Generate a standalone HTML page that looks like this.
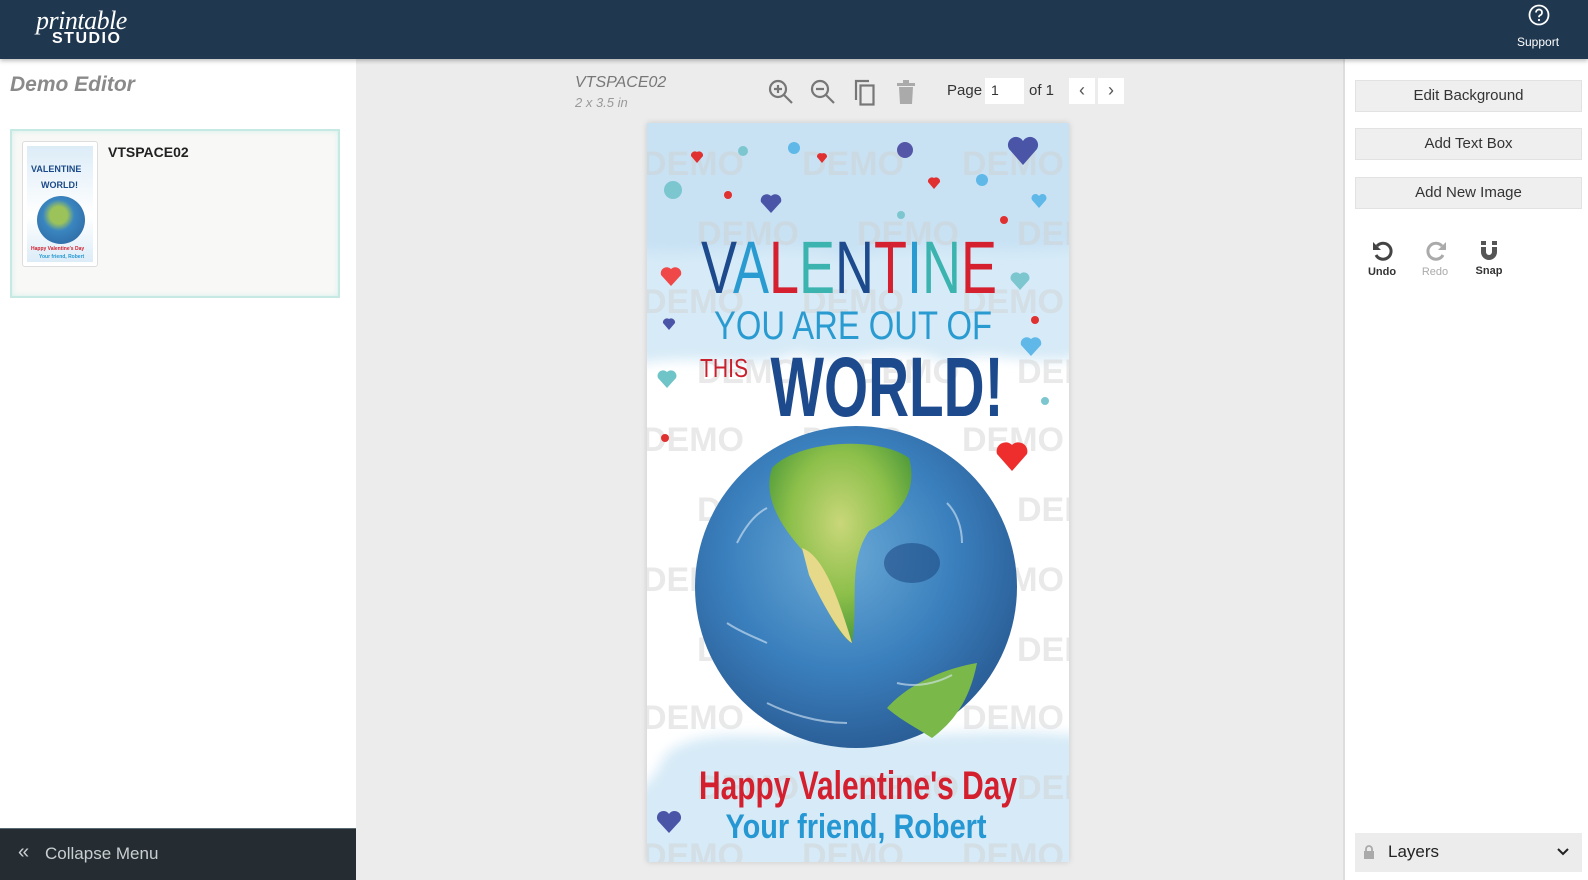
<!DOCTYPE html>
<html><head><meta charset="utf-8"><style>
*{margin:0;padding:0;box-sizing:border-box}
body{width:1588px;height:880px;overflow:hidden;background:#ececec;font-family:"Liberation Sans",sans-serif;position:relative}
.abs{position:absolute}
#hdr{left:0;top:0;width:1588px;height:59px;background:#1f3850;box-shadow:0 2px 4px rgba(0,0,0,.25);z-index:5}
#left{left:0;top:59px;width:356px;height:821px;background:#fff}
#right{left:1343px;top:59px;width:245px;height:821px;background:#fff;border-left:2px solid #ddd}
.btn{position:absolute;left:1355px;width:227px;height:32px;background:#efefef;border:1px solid #e2e2e2;color:#333;font-size:15px;text-align:center;line-height:30px}
.lbl{position:absolute;font-size:11px;font-weight:bold;text-align:center;width:40px}
</style></head><body>
<div id="hdr" class="abs">
  <div class="abs" style="left:36px;top:6px;color:#fff;font-family:'Liberation Serif',serif;font-style:italic;font-size:26px;letter-spacing:-0.5px">printable</div>
  <div class="abs" style="left:52px;top:30px;color:#fff;font-weight:bold;font-size:16px;letter-spacing:1.5px">STUDIO</div>
  <svg class="abs" style="left:1528px;top:4px" width="22" height="22" viewBox="0 0 22 22"><circle cx="11" cy="11" r="9.5" fill="none" stroke="#fff" stroke-width="1.8"/><path d="M8 8.5a3 3 0 1 1 4 2.8c-.8.4-1 1-1 2" fill="none" stroke="#fff" stroke-width="1.8"/><circle cx="11" cy="16" r="1.1" fill="#fff"/></svg>
  <div class="abs" style="left:1517px;top:35px;color:#fff;font-size:12px">Support</div>
</div>
<div id="left" class="abs">
  <div class="abs" style="left:10px;top:14px;font-size:21px;font-weight:bold;font-style:italic;color:#8a8a8a">Demo Editor</div>
  <div class="abs" style="left:10px;top:70px;width:330px;height:169px;background:#f8f8f6;border:2px solid #c6e9e3;box-shadow:inset 0 0 6px #d3efe9"></div>
  <div class="abs" style="left:22px;top:82px;width:76px;height:126px;background:#fff;border:1px solid #ddd;border-radius:3px;padding:4px">
    <div style="width:100%;height:100%;background:linear-gradient(#dcecf7,#fff 60%,#dcecf7);position:relative">
      <div style="position:absolute;left:4px;top:18px;font-size:9px;font-weight:bold;color:#1b4a8a">VALENTINE</div>
      <div style="position:absolute;left:14px;top:34px;font-size:9px;font-weight:bold;color:#1b4a8a">WORLD!</div>
      <div style="position:absolute;left:10px;top:50px;width:48px;height:48px;border-radius:50%;background:radial-gradient(circle at 45% 40%,#9cc35a 0 22%,#3a86c0 40%,#2a5f9a)"></div>
      <div style="position:absolute;left:4px;top:100px;font-size:5px;font-weight:bold;color:#d0202e">Happy Valentine's Day</div>
      <div style="position:absolute;left:12px;top:108px;font-size:5px;font-weight:bold;color:#2597d2">Your friend, Robert</div>
    </div>
  </div>
  <div class="abs" style="left:108px;top:85px;font-size:14px;font-weight:bold;color:#222">VTSPACE02</div>
</div>
<div class="abs" style="left:0;top:828px;width:356px;height:52px;background:#252d33;border-top:1px solid #5a6a72">
  <div class="abs" style="left:18px;top:12px;color:#c9ced1;font-size:20px">«</div>
  <div class="abs" style="left:45px;top:15px;color:#c9ced1;font-size:17px">Collapse Menu</div>
</div>
<div class="abs" style="left:575px;top:74px;font-size:16px;font-style:italic;color:#777">VTSPACE02</div>
<div class="abs" style="left:575px;top:95px;font-size:13px;font-style:italic;color:#999">2 x 3.5 in</div>
<svg class="abs" style="left:767px;top:78px" width="28" height="28" viewBox="0 0 28 28"><circle cx="11" cy="11" r="8" fill="none" stroke="#777" stroke-width="2.2"/><path d="M17 17l8 8M7 11h8M11 7v8" stroke="#777" stroke-width="2.2"/></svg>
<svg class="abs" style="left:809px;top:78px" width="28" height="28" viewBox="0 0 28 28"><circle cx="11" cy="11" r="8" fill="none" stroke="#777" stroke-width="2.2"/><path d="M17 17l8 8M7 11h8" stroke="#777" stroke-width="2.2"/></svg>
<svg class="abs" style="left:852px;top:78px" width="26" height="30" viewBox="0 0 26 30"><path d="M4 22V3h13" fill="none" stroke="#777" stroke-width="2.2"/><rect x="8.5" y="7.5" width="13" height="19" fill="none" stroke="#777" stroke-width="2.2"/></svg>
<svg class="abs" style="left:896px;top:80px" width="20" height="24" viewBox="0 0 20 24"><rect x="1" y="3" width="18" height="3" fill="#aaa"/><rect x="7" y="0" width="6" height="3" fill="#aaa"/><path d="M3 7h14l-1 17H4z" fill="#aaa"/></svg>
<div class="abs" style="left:947px;top:82px;font-size:15px;color:#333">Page</div>
<div class="abs" style="left:985px;top:78px;width:39px;height:26px;background:#fff;font-size:14px;color:#333;padding:4px 6px">1</div>
<div class="abs" style="left:1029px;top:82px;font-size:15px;color:#333">of 1</div>
<div class="abs" style="left:1069px;top:78px;width:26px;height:26px;background:#fff;color:#555;font-size:18px;text-align:center;line-height:24px">&#8249;</div>
<div class="abs" style="left:1098px;top:78px;width:26px;height:26px;background:#fff;color:#555;font-size:18px;text-align:center;line-height:24px">&#8250;</div>
<svg class="abs" style="left:647px;top:123px;box-shadow:0 0 6px rgba(0,0,0,.15)" width="422" height="739" viewBox="0 0 422 739">
<defs>
<radialGradient id="g1" cx="45%" cy="40%" r="60%"><stop offset="0" stop-color="#6aaad6"/><stop offset=".6" stop-color="#3a7fbd"/><stop offset="1" stop-color="#2b5f98"/></radialGradient>
<radialGradient id="land" cx="50%" cy="40%" r="60%"><stop offset="0" stop-color="#c9d77a"/><stop offset=".6" stop-color="#8cbf4a"/><stop offset="1" stop-color="#4e9a3a"/></radialGradient>
<filter id="bl" x="-10%" y="-10%" width="120%" height="120%"><feGaussianBlur stdDeviation="6"/></filter>
</defs>
<rect width="422" height="739" fill="#fff"/>
<path d="M-30 -30H452V230C380 250 340 220 300 240C250 215 200 245 150 230C100 250 50 225 -30 245Z" fill="#d6eaf7" filter="url(#bl)"/>
<path d="M-30 -30H452V120C350 140 280 110 200 135C120 110 60 140 -30 125Z" fill="#c8e2f4" filter="url(#bl)"/>
<path d="M20 630C60 600 120 620 180 610C260 620 340 600 452 615V770H-30V680C10 660 10 645 20 630Z" fill="#d6eaf7" filter="url(#bl)"/>
<g fill="#d0d0d0" font-family="Liberation Sans" font-weight="bold" font-size="34" opacity=".45">
<text x="-5" y="52">DEMO</text><text x="155" y="52">DEMO</text><text x="315" y="52">DEMO</text>
<text x="50" y="122">DEMO</text><text x="210" y="122">DEMO</text><text x="370" y="122">DEMO</text>
<text x="-5" y="190">DEMO</text><text x="155" y="190">DEMO</text><text x="315" y="190">DEMO</text>
<text x="50" y="260">DEMO</text><text x="210" y="260">DEMO</text><text x="370" y="260">DEMO</text>
<text x="-5" y="328">DEMO</text><text x="155" y="328">DEMO</text><text x="315" y="328">DEMO</text>
<text x="50" y="398">DEMO</text><text x="210" y="398">DEMO</text><text x="370" y="398">DEMO</text>
<text x="-5" y="468">DEMO</text><text x="155" y="468">DEMO</text><text x="315" y="468">DEMO</text>
<text x="50" y="538">DEMO</text><text x="210" y="538">DEMO</text><text x="370" y="538">DEMO</text>
<text x="-5" y="606">DEMO</text><text x="155" y="606">DEMO</text><text x="315" y="606">DEMO</text>
<text x="50" y="676">DEMO</text><text x="210" y="676">DEMO</text><text x="370" y="676">DEMO</text>
<text x="-5" y="744">DEMO</text><text x="155" y="744">DEMO</text><text x="315" y="744">DEMO</text>
</g>
<g>
<circle cx="26" cy="67" r="9" fill="#7cc6cf"/><circle cx="147" cy="25" r="6" fill="#5fb8e8"/><circle cx="258" cy="27" r="8" fill="#5457a8"/><circle cx="81" cy="72" r="4" fill="#e03030"/><circle cx="335" cy="57" r="6" fill="#5fb8e8"/><circle cx="357" cy="97" r="4" fill="#e03030"/><circle cx="388" cy="197" r="4" fill="#e03030"/><circle cx="398" cy="278" r="4" fill="#7cc6cf"/><circle cx="18" cy="315" r="4" fill="#e03030"/><circle cx="254" cy="92" r="4" fill="#7cc6cf"/><circle cx="96" cy="28" r="5" fill="#7cc6cf"/>
<path d="M376 42l-14-16a8 8 0 0 1 14-8 8 8 0 0 1 14 8z" fill="#4a55a8"/>
<path d="M124 90l-10-11a6 6 0 0 1 10-6 6 6 0 0 1 10 6z" fill="#4a55a8"/>
<path d="M24 163l-10-11a6 6 0 0 1 10-6 6 6 0 0 1 10 6z" fill="#f04848"/>
<path d="M22 207l-6-7a4 4 0 0 1 6-4 4 4 0 0 1 6 4z" fill="#4a55a8"/>
<path d="M20 265l-9-10a5.5 5.5 0 0 1 9-6 5.5 5.5 0 0 1 9 6z" fill="#6fc4c8"/>
<path d="M384 233l-10-11a6 6 0 0 1 10-6 6 6 0 0 1 10 6z" fill="#5fb8e8"/>
<path d="M373 167l-9-10a5.5 5.5 0 0 1 9-6 5.5 5.5 0 0 1 9 6z" fill="#7cc6cf"/>
<path d="M392 85l-7-8a4 4 0 0 1 7-4 4 4 0 0 1 7 4z" fill="#5fb8e8"/>
<path d="M365 348l-15-17a9 9 0 0 1 15-9 9 9 0 0 1 15 9z" fill="#ee2d2d"/>
<path d="M22 710l-11-12a6.5 6.5 0 0 1 11-7 6.5 6.5 0 0 1 11 7z" fill="#4a55a8"/>
<path d="M50 40l-6-7a4 4 0 0 1 6-4 4 4 0 0 1 6 4z" fill="#e03030"/>
<path d="M175 40l-5-6a3.5 3.5 0 0 1 5-3.5 3.5 3.5 0 0 1 5 3.5z" fill="#e03030"/>
<path d="M287 66l-6-7a4 4 0 0 1 6-4 4 4 0 0 1 6 4z" fill="#e03030"/>
</g>
<circle cx="209" cy="464" r="161" fill="url(#g1)"/>
<path d="M125 345C150 318 230 312 262 335C272 370 250 395 222 408C200 440 212 480 205 520C190 512 170 470 158 430C135 405 115 375 125 345Z" fill="url(#land)"/>
<path d="M155 425C175 432 190 470 205 520C195 515 175 480 162 452Z" fill="#e6d98a"/>
<path d="M240 585C262 560 300 545 330 540C322 580 305 600 285 615C270 605 255 598 240 585Z" fill="#7bb84a"/>
<ellipse cx="265" cy="440" rx="28" ry="20" fill="#1f4d85" opacity=".6"/>
<g stroke="#d8eaf6" stroke-width="2" fill="none" opacity=".6">
<path d="M90 420c10-20 20-30 30-35M80 500c15 10 30 15 40 20M250 560c20 5 40 0 55-8M300 380c10 10 15 25 15 40M120 580c20 10 50 20 80 20"/>
</g>
<g font-family="'Liberation Sans Narrow','Liberation Sans',sans-serif" text-anchor="middle">
<text x="202" y="170" font-size="74" fill="#1c4a8c" textLength="296" lengthAdjust="spacingAndGlyphs">V<tspan fill="#2a9bd1">A</tspan><tspan fill="#d52030">L</tspan><tspan fill="#3bb4b0">E</tspan>N<tspan fill="#d52030">T</tspan><tspan fill="#2a9bd1">I</tspan><tspan fill="#3bb4b0">N</tspan><tspan fill="#d52030">E</tspan></text>
<text x="206" y="216" font-size="40" fill="#2a9bd1" textLength="278" lengthAdjust="spacingAndGlyphs">YOU ARE OUT OF</text>
<text x="77" y="254" font-size="26" fill="#c8202c" textLength="48" lengthAdjust="spacingAndGlyphs">THIS</text>
</g>
<g font-family="'Liberation Sans',sans-serif" font-weight="bold" text-anchor="middle">
<text x="240" y="293" font-size="84" fill="#1c4a8c" textLength="233" lengthAdjust="spacingAndGlyphs">WORLD!</text>
<text x="211" y="676" font-size="40" fill="#d41f2e" textLength="318" lengthAdjust="spacingAndGlyphs">Happy Valentine's Day</text>
<text x="209" y="715" font-size="34" fill="#2597d2" textLength="261" lengthAdjust="spacingAndGlyphs">Your friend, Robert</text>
</g>
</svg>
<div id="right" class="abs"></div>
<div class="btn" style="top:80px">Edit Background</div>
<div class="btn" style="top:128px">Add Text Box</div>
<div class="btn" style="top:177px">Add New Image</div>
<svg class="abs" style="left:1371px;top:240px" width="24" height="22" viewBox="0 0 24 22"><path d="M6 6a8 8 0 1 1 -1 9" fill="none" stroke="#444" stroke-width="3"/><path d="M2 2v8h8z" fill="#444"/></svg>
<svg class="abs" style="left:1424px;top:240px" width="24" height="22" viewBox="0 0 24 22"><path d="M18 6a8 8 0 1 0 1 9" fill="none" stroke="#aaa" stroke-width="3"/><path d="M22 2v8h-8z" fill="#aaa"/></svg>
<svg class="abs" style="left:1478px;top:241px" width="22" height="22" viewBox="0 0 22 22"><path d="M3 0h5v4H3zM14 0h5v4h-5z" fill="#555"/><path d="M3 6h5v5a3 3 0 0 0 6 0V6h5v5a8 8 0 0 1-16 0z" fill="#555"/></svg>
<div class="lbl" style="left:1362px;top:266px;color:#333">Undo</div>
<div class="lbl" style="left:1415px;top:266px;color:#aaa;font-weight:normal">Redo</div>
<div class="lbl" style="left:1469px;top:265px;color:#333">Snap</div>
<div class="abs" style="left:1355px;top:833px;width:227px;height:39px;background:#ececec">
  <svg class="abs" style="left:8px;top:12px" width="12" height="14" viewBox="0 0 12 14"><path d="M3 6V4a3 3 0 0 1 6 0v2" fill="none" stroke="#aaa" stroke-width="1.8"/><rect x="1" y="6" width="10" height="8" fill="#aaa"/></svg>
  <div class="abs" style="left:33px;top:9px;font-size:17px;color:#222">Layers</div>
  <svg class="abs" style="left:201px;top:14px" width="14" height="10" viewBox="0 0 14 10"><path d="M2 2l5 5 5-5" fill="none" stroke="#222" stroke-width="2"/></svg>
</div>
</body></html>
